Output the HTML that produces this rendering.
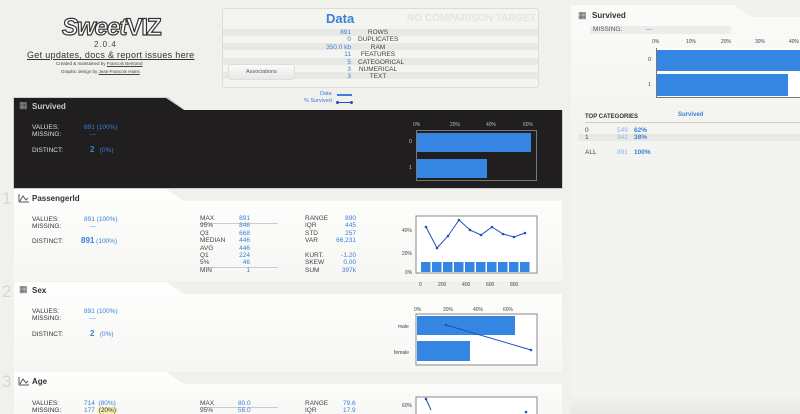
<!DOCTYPE html>
<html><head><meta charset="utf-8"><style>
*{margin:0;padding:0;box-sizing:border-box}
html,body{width:800px;height:414px;overflow:hidden}
body{background:#f0f0ec;font-family:"Liberation Sans",sans-serif;position:relative;color:#333}
.a{position:absolute;white-space:nowrap}
.s{font-size:6.5px;line-height:7.4px}
.b{color:#3a7fd9}
.lb{color:#8ab4ea}
.g{color:#444}
.card{position:absolute;left:14px;width:548px;background:linear-gradient(#fefefd,#f6f6f4);clip-path:polygon(0 0,152px 0,170px 12px,548px 12px,548px 100%,0 100%);}
.num{position:absolute;left:2px;font-size:17px;color:#d6d6d2}
.t{font-size:8px;font-weight:bold;color:#333}
.r{text-align:right}
</style></head><body>

<div class="a" style="left:62px;top:14px;font:italic bold 24px 'Liberation Sans',sans-serif;color:#fff;-webkit-text-stroke:1.2px #333;letter-spacing:-1px">Sweet<span style="font-style:normal">VIZ</span></div>
<div class="a" style="left:94px;top:40px;font-size:8px;color:#444;letter-spacing:1px">2.0.4</div>
<div class="a" style="left:27px;top:50px;font-size:9px;color:#333;text-decoration:underline;letter-spacing:.3px">Get updates, docs &amp; report issues here</div>
<div class="a" style="left:56px;top:61px;font-size:4.5px;color:#444">Created &amp; maintained by <u>Francois Bertrand</u></div>
<div class="a" style="left:61px;top:69px;font-size:4.5px;color:#444">Graphic design by <u>Jean-Francois Hains</u></div>

<div class="a" style="left:222px;top:8px;width:317px;height:80px;border:1px solid #dcdcd8;border-radius:3px;background:#f4f4f1"></div>
<div class="a" style="left:223px;top:29px;width:315px;height:7px;background:#e8e8e4"></div>
<div class="a" style="left:223px;top:43px;width:315px;height:7px;background:#e8e8e4"></div>
<div class="a" style="left:223px;top:58px;width:315px;height:7px;background:#e8e8e4"></div>
<div class="a" style="left:223px;top:72px;width:315px;height:7px;background:#e8e8e4"></div>
<div class="a b" style="left:326px;top:11px;font-size:13px;font-weight:bold">Data</div>
<div class="a" style="left:407px;top:13px;font-size:10px;font-weight:bold;color:#e4e4e0">NO COMPARISON TARGET</div>
<div class="a s b r" style="left:300px;top:29px;width:51px">891<br>0<br>350.0 kb<br>11<br>5<br>3<br>3</div>
<div class="a s" style="left:358px;top:29px;width:40px;text-align:center;color:#444">ROWS<br>DUPLICATES<br>RAM<br>FEATURES<br>CATEGORICAL<br>NUMERICAL<br>TEXT</div>
<div class="a" style="left:228px;top:64px;width:67px;height:16px;border-radius:3px;background:linear-gradient(#fafafa,#e8e8e6);border:1px solid #ddd;font-size:5.5px;color:#555;text-align:center;line-height:14px">Associations</div>
<div class="a b" style="left:320px;top:91px;font-size:5.5px">Data</div>
<div class="a" style="left:337px;top:94px;width:15px;height:2px;background:#3a7fd9"></div>
<div class="a b" style="left:304px;top:98px;font-size:5.5px">% Survived</div>
<div class="a" style="left:337px;top:102px;width:15px;height:1px;background:#1f50c0"></div>
<div class="a" style="left:336px;top:101px;width:3px;height:3px;border-radius:50%;background:#1f50c0"></div>
<div class="a" style="left:350px;top:101px;width:3px;height:3px;border-radius:50%;background:#1f50c0"></div>

<div class="a" style="left:571px;top:5px;width:229px;height:409px;background:linear-gradient(#fbfbfa,#f3f3ef 30%,#f3f3ef 95%,#e8e8e4);clip-path:polygon(0 0,163px 0,180px 12px,229px 12px,229px 100%,0 100%)"></div>
<div class="a" style="left:578px;top:10px;font-size:9px;color:#555">&#9638;</div>
<div class="a t" style="left:592px;top:11px">Survived</div>
<div class="a" style="left:590px;top:26px;width:141px;height:8px;background:#ececea"></div>
<div class="a s" style="left:593px;top:26px;color:#555">MISSING:</div>
<div class="a s b" style="left:646px;top:26px">---</div>
<div class="a" style="left:652px;top:39px;font-size:5px;color:#444">0%</div>
<div class="a" style="left:686px;top:39px;font-size:5px;color:#444">10%</div>
<div class="a" style="left:721px;top:39px;font-size:5px;color:#444">20%</div>
<div class="a" style="left:755px;top:39px;font-size:5px;color:#444">30%</div>
<div class="a" style="left:789px;top:39px;font-size:5px;color:#444">40%</div>
<div class="a" style="left:656px;top:48px;width:150px;height:50px;border-left:1px solid #777;border-bottom:1px solid #777;background:#fff"></div>
<div class="a" style="left:657px;top:50px;width:143px;height:21px;background:#3585e3"></div>
<div class="a" style="left:657px;top:74px;width:131px;height:22px;background:#3585e3"></div>
<div class="a" style="left:648px;top:57px;font-size:5.5px;color:#444">0</div>
<div class="a" style="left:648px;top:82px;font-size:5.5px;color:#444">1</div>
<div class="a" style="left:585px;top:114px;font-size:6px;font-weight:bold;color:#333">TOP CATEGORIES</div>
<div class="a b" style="left:678px;top:112px;font-size:6px;font-weight:bold">Survived</div>
<div class="a" style="left:585px;top:122px;width:215px;height:1px;background:#ccc"></div>
<div class="a" style="left:578px;top:134px;width:222px;height:7px;background:#e8e8e5"></div>
<div class="a s g" style="left:585px;top:127px">0<br>1</div>
<div class="a s lb" style="left:617px;top:127px">549<br>342</div>
<div class="a s b" style="left:634px;top:127px;font-weight:bold">62%<br>38%</div>
<div class="a s g" style="left:585px;top:149px">ALL</div>
<div class="a s lb" style="left:617px;top:149px">891</div>
<div class="a s b" style="left:634px;top:149px;font-weight:bold">100%</div>

<div class="a" style="left:13px;top:97px;width:550px;height:92px;background:#cfcfcb;clip-path:polygon(0 0,155px 0,172px 13px,550px 13px,550px 100%,0 100%)"></div>
<div class="a" style="left:14px;top:98px;width:548px;height:90px;background:#201e1e;clip-path:polygon(0 0,152px 0,170px 12px,548px 12px,548px 100%,0 100%)"></div>
<div class="a" style="left:19px;top:100px;font-size:9px;color:#999">&#9638;</div>
<div class="a t" style="left:32px;top:102px;color:#ccc">Survived</div>
<div class="a s" style="left:32px;top:124px;color:#ddd">VALUES:<br>MISSING:</div>
<div class="a s b" style="left:84px;top:124px">891 (100%)<br>&nbsp;&nbsp;&nbsp;---</div>
<div class="a s" style="left:32px;top:147px;color:#ddd">DISTINCT:</div>
<div class="a s b" style="left:90px;top:146px"><b style="font-size:8px">2</b> &nbsp;&nbsp;(0%)</div>
<div class="a" style="left:413px;top:122px;font-size:5px;color:#bbb;width:130px">0%<span style="position:absolute;left:37px">20%</span><span style="position:absolute;left:73px">40%</span><span style="position:absolute;left:110px">60%</span></div>
<div class="a" style="left:416px;top:130px;width:121px;height:51px;border:1px solid #777"></div>
<div class="a" style="left:417px;top:133px;width:114px;height:19px;background:#3585e3"></div>
<div class="a" style="left:417px;top:159px;width:70px;height:19px;background:#3585e3"></div>
<div class="a" style="left:409px;top:139px;font-size:5.5px;color:#bbb">0</div>
<div class="a" style="left:409px;top:165px;font-size:5.5px;color:#bbb">1</div>

<div class="num" style="top:189px">1</div>
<div class="card" style="top:189px;height:92px"></div>
<svg class="a" style="left:18px;top:193px" width="12" height="10"><path d="M1 9V1M1 9H11M2 8L5 3L8 7L10 5" fill="none" stroke="#555" stroke-width="1"/></svg>
<div class="a t" style="left:32px;top:194px">PassengerId</div>
<div class="a s" style="left:32px;top:216px">VALUES:<br>MISSING:</div>
<div class="a s b" style="left:84px;top:216px">891 (100%)<br>&nbsp;&nbsp;&nbsp;---</div>
<div class="a s" style="left:32px;top:238px">DISTINCT:</div>
<div class="a s b" style="left:81px;top:237px"><b style="font-size:8px">891</b> (100%)</div>
<div class="a" style="left:200px;top:223px;width:78px;height:1px;background:#ccc"></div>
<div class="a" style="left:200px;top:267px;width:78px;height:1px;background:#ccc"></div>
<div class="a s g" style="left:200px;top:215px">MAX<br>95%<br>Q3<br>MEDIAN<br>AVG<br>Q1<br>5%<br>MIN</div>
<div class="a s b r" style="left:220px;top:215px;width:30px">891<br>846<br>668<br>446<br>446<br>224<br>46<br>1</div>
<div class="a s g" style="left:305px;top:215px">RANGE<br>IQR<br>STD<br>VAR<br><br>KURT.<br>SKEW<br>SUM</div>
<div class="a s b r" style="left:320px;top:215px;width:36px">890<br>445<br>257<br>66,231<br><br>-1.20<br>0.00<br>397k</div>
<svg class="a" style="left:395px;top:212px" width="150" height="78">
<rect x="21" y="4" width="121" height="57" fill="#fff" stroke="#888" stroke-width="1"/>
<g fill="#3585e3"><rect x="26" y="50" width="9.5" height="10"/><rect x="37" y="50" width="9.5" height="10"/><rect x="48" y="50" width="9.5" height="10"/><rect x="59" y="50" width="9.5" height="10"/><rect x="70" y="50" width="9.5" height="10"/><rect x="81" y="50" width="9.5" height="10"/><rect x="92" y="50" width="9.5" height="10"/><rect x="103" y="50" width="9.5" height="10"/><rect x="114" y="50" width="9.5" height="10"/><rect x="125" y="50" width="9.5" height="10"/></g>
<polyline points="31,15 42,36 53,24 64,8 75,18 86,23 97,15 108,22 119,25 130,21" fill="none" stroke="#1f50c0" stroke-width="1"/>
<g fill="#1f50c0"><circle cx="31" cy="15" r="1.3"/><circle cx="42" cy="36" r="1.3"/><circle cx="53" cy="24" r="1.3"/><circle cx="64" cy="8" r="1.3"/><circle cx="75" cy="18" r="1.3"/><circle cx="86" cy="23" r="1.3"/><circle cx="97" cy="15" r="1.3"/><circle cx="108" cy="22" r="1.3"/><circle cx="119" cy="25" r="1.3"/><circle cx="130" cy="21" r="1.3"/></g>
<g font-size="5" fill="#444" font-family="Liberation Sans"><text x="7" y="20">40%</text><text x="7" y="43">20%</text><text x="10" y="62">0%</text><text x="24" y="74">0</text><text x="43" y="74">200</text><text x="67" y="74">400</text><text x="91" y="74">600</text><text x="115" y="74">800</text></g>
</svg>

<div class="num" style="top:282px">2</div>
<div class="card" style="top:282px;height:90px"></div>
<div class="a" style="left:19px;top:284px;font-size:9px;color:#555">&#9638;</div>
<div class="a t" style="left:32px;top:286px">Sex</div>
<div class="a s" style="left:32px;top:308px">VALUES:<br>MISSING:</div>
<div class="a s b" style="left:84px;top:308px">891 (100%)<br>&nbsp;&nbsp;&nbsp;---</div>
<div class="a s" style="left:32px;top:331px">DISTINCT:</div>
<div class="a s b" style="left:90px;top:330px"><b style="font-size:8px">2</b> &nbsp;&nbsp;(0%)</div>
<svg class="a" style="left:380px;top:300px" width="170" height="70">
<rect x="36" y="14" width="121" height="51" fill="#fff" stroke="#888" stroke-width="1"/>
<rect x="37" y="16" width="98" height="19" fill="#3585e3"/>
<rect x="37" y="41" width="53" height="20" fill="#3585e3"/>
<polyline points="66,25 151,50" stroke="#1f50c0" fill="none" stroke-width="1"/>
<circle cx="66" cy="25" r="1.3" fill="#1f50c0"/><circle cx="151" cy="50" r="1.3" fill="#1f50c0"/>
<g font-size="5" fill="#444" font-family="Liberation Sans"><text x="34" y="11">0%</text><text x="63" y="11">20%</text><text x="93" y="11">40%</text><text x="123" y="11">60%</text><text x="18" y="28">male</text><text x="14" y="54">female</text></g>
</svg>

<div class="num" style="top:372px">3</div>
<div class="card" style="top:372px;height:50px"></div>
<svg class="a" style="left:18px;top:376px" width="12" height="10"><path d="M1 9V1M1 9H11M2 8L5 3L8 7L10 5" fill="none" stroke="#555" stroke-width="1"/></svg>
<div class="a t" style="left:32px;top:377px">Age</div>
<div class="a s" style="left:32px;top:400px">VALUES:<br>MISSING:</div>
<div class="a s b" style="left:84px;top:400px">714 &nbsp;(80%)<br>177 <span style="background:#f6eeb0;color:#333;border-radius:3px;padding:0 2px">(20%)</span></div>
<div class="a" style="left:200px;top:407px;width:78px;height:1px;background:#ccc"></div>
<div class="a s g" style="left:200px;top:400px">MAX<br>95%</div>
<div class="a s b" style="left:238px;top:400px">80.0<br>56.0</div>
<div class="a s g" style="left:305px;top:400px">RANGE<br>IQR</div>
<div class="a s b" style="left:343px;top:400px">79.6<br>17.9</div>
<svg class="a" style="left:395px;top:396px" width="150" height="18">
<rect x="21" y="1" width="121" height="30" fill="#fff" stroke="#888" stroke-width="1"/>
<polyline points="31,3 36,14" stroke="#1f50c0" fill="none"/><circle cx="31" cy="3" r="1.3" fill="#1f50c0"/><circle cx="131" cy="16" r="1.3" fill="#1f50c0"/>
<text x="7" y="11" font-size="5" fill="#444" font-family="Liberation Sans">60%</text>
</svg>
</body></html>
